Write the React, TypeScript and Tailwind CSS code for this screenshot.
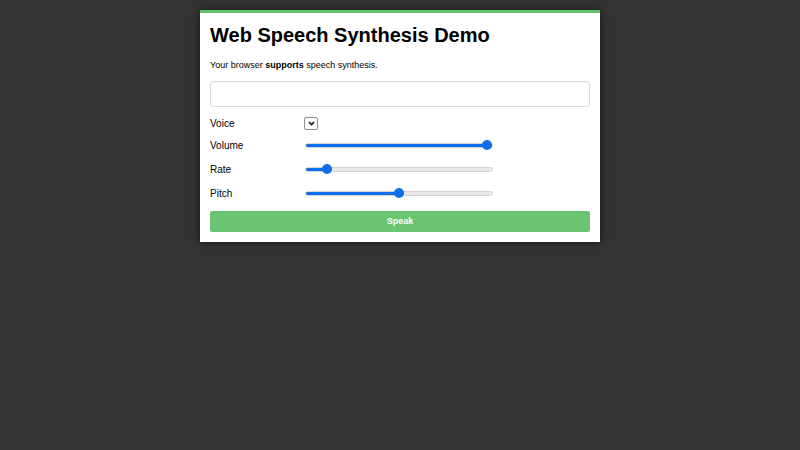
import React, { useState } from 'react';

const font = { fontFamily: '"Liberation Sans", Arial, sans-serif' };

interface SliderProps {
  min: number;
  max: number;
  step: number;
  value: number;
  onChange: (v: number) => void;
}

// custom styled range so the track/thumb sizes match the screenshot
function Slider({ min, max, step, value, onChange }: SliderProps) {
  const pct = ((value - min) / (max - min)) * 100;
  return (
    <input
      type="range"
      min={min}
      max={max}
      step={step}
      value={value}
      onChange={(e) => onChange(parseFloat(e.target.value))}
      className="w-[188px] h-[5px] appearance-none rounded-full border border-[#d4d4d4] outline-none cursor-pointer [&::-webkit-slider-thumb]:appearance-none [&::-webkit-slider-thumb]:w-[10px] [&::-webkit-slider-thumb]:h-[10px] [&::-webkit-slider-thumb]:rounded-full [&::-webkit-slider-thumb]:bg-[#0f6fe8] [&::-webkit-slider-thumb]:border-0"
      style={{
        background: `linear-gradient(to right, #0f6fe8 0%, #0f6fe8 ${pct}%, #e9e9e9 ${pct}%, #e9e9e9 100%)`,
      }}
    />
  );
}

export default function App() {
  const [text, setText] = useState('');
  const [volume, setVolume] = useState(1);
  const [rate, setRate] = useState(1);
  const [pitch, setPitch] = useState(1);

  return (
    <div className="min-h-[450px] w-full bg-[#333333] pt-[10px]" style={font}>
      <div className="mx-auto w-[400px] bg-white border-t-[3px] border-[#66c16f] shadow-[0_0_8px_rgba(0,0,0,0.6)] px-[10px] pt-[10px] pb-[10px] text-black">
        <h1 className="text-[20px] leading-[23px] font-bold mt-[1px]">Web Speech Synthesis Demo</h1>

        <p className="text-[9px] leading-[11px] mt-[13px]">
          Your browser <strong>supports</strong> speech synthesis.
        </p>

        <input
          type="text"
          value={text}
          onChange={(e) => setText(e.target.value)}
          className="mt-[10px] block w-full h-[26px] border border-[#dcdcdc] rounded-[3px] shadow-[inset_0_1px_2px_rgba(0,0,0,0.06)] px-2 text-[10px] outline-none"
        />

        <div className="mt-[6px] flex items-center h-[20px]">
          <label className="w-[94px] text-[10px]">Voice</label>
          <div className="w-[14px] h-[13px] border border-[#8f8f8f] rounded-[2px] flex items-center justify-center bg-white">
            <svg width="7" height="5" viewBox="0 0 7 5">
              <path d="M1 1 L3.5 3.5 L6 1" fill="none" stroke="#111" strokeWidth="1.6" />
            </svg>
          </div>
        </div>

        <div className="flex items-center h-[24px]">
          <label className="w-[95px] text-[10px]">Volume</label>
          <Slider min={0} max={1} step={0.1} value={volume} onChange={setVolume} />
        </div>
        <div className="flex items-center h-[24px]">
          <label className="w-[95px] text-[10px]">Rate</label>
          <Slider min={0.1} max={10} step={0.1} value={rate} onChange={setRate} />
        </div>
        <div className="flex items-center h-[24px]">
          <label className="w-[95px] text-[10px]">Pitch</label>
          <Slider min={0} max={2} step={0.1} value={pitch} onChange={setPitch} />
        </div>

        <button className="mt-[6px] w-full h-[21px] bg-[#6ac573] rounded-[2px] text-white text-[9px] font-bold">
          Speak
        </button>
      </div>
    </div>
  );
}
